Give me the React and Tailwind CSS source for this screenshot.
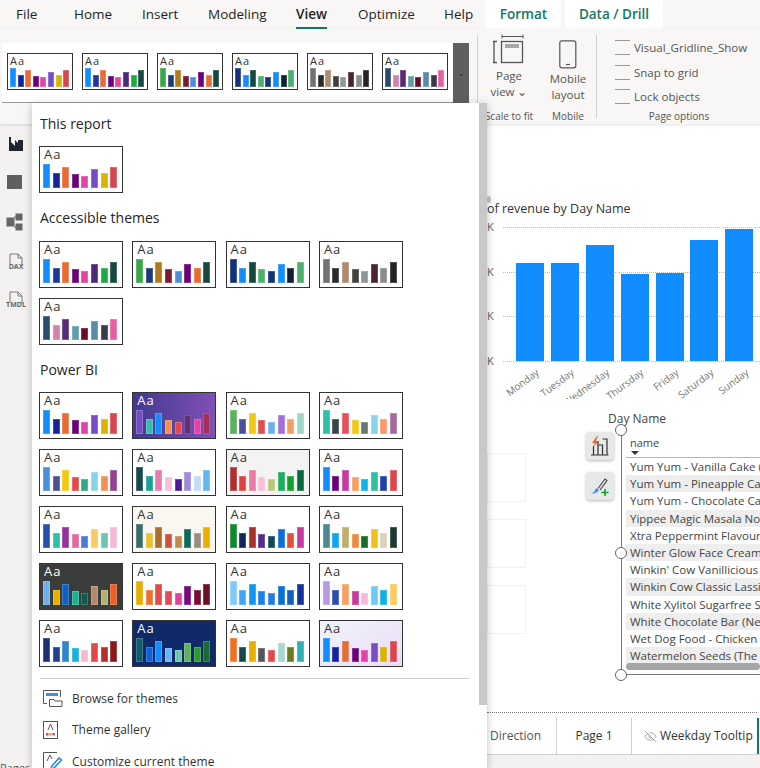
import { EyeOff } from 'lucide-react'

const HEIGHTS = [24, 15, 21, 14, 12, 19, 15, 21]
const SMALL_HEIGHTS = [19, 12, 17, 11, 10, 15, 12, 17]

const DEFAULT = ['#118DFF', '#12239E', '#E66C37', '#6B007B', '#E044A7', '#744EC2', '#D9B300', '#D64550']

const ACCESSIBLE = [
  ['#118DFF', '#1F3899', '#E66C37', '#6B007B', '#E044A7', '#4B2A7B', '#1AAB40', '#15493F'],
  ['#3AA845', '#1F3A7A', '#B37A1B', '#7A1A2E', '#4A90D9', '#6B007B', '#E66C37', '#15493F'],
  ['#12327A', '#118DFF', '#15493F', '#4CAF6E', '#12327A', '#118DFF', '#10202F', '#4CAF6E'],
  ['#6F7373', '#2B2B2B', '#AD8A70', '#404040', '#8F9699', '#4A2430', '#8C8C8C', '#252423'],
  ['#2B4A6F', '#D77FAE', '#5A2A7A', '#5F9EAF', '#6B0A2A', '#5B8BA8', '#3A3A4A', '#E85FA0'],
]

const POWER_BI = [
  { colors: DEFAULT },
  { colors: ['#744EC2', '#3FB8AF', '#118DFF', '#F2914F', '#E04A4A', '#5F2E7E', '#E044A7', '#A62E50'], bg: 'bg-gradient-to-r from-[#41398f] to-[#7f50b8]', light: true },
  { colors: ['#5BB25E', '#4A4E9C', '#F2C811', '#E04E4E', '#69B1EF', '#A66FD8', '#F2A05F', '#A0D8C8'] },
  { colors: ['#2DBFA8', '#374649', '#E8505B', '#F2C811', '#6E7373', '#8AD4EB', '#FE9666', '#A66999'] },
  { colors: ['#4A90D9', '#4A5090', '#F2C811', '#E04A4A', '#2FA884', '#8AD4EB', '#F2914F', '#96408F'] },
  { colors: ['#15494F', '#1AA198', '#E87CAC', '#F7BFD8', '#4A1A9A', '#A08BDB', '#BDDDFA', '#64B5F6'] },
  { colors: ['#B03030', '#E03F3F', '#E87C9E', '#F7BFD8', '#B8C878', '#1FAB60', '#13A02A', '#0B6A3F'], bg: 'bg-[#f3f3f3]' },
  { colors: ['#118DFF', '#6B007B', '#C83A9E', '#F89E5F', '#0FB5E8', '#2DBFA8', '#1E3FAE', '#DF4848'] },
  { colors: ['#2A4DB0', '#2DBFA8', '#96309F', '#E26AA0', '#4A7AD8', '#F9CB60', '#6FC4AC', '#F4B9D9'] },
  { colors: ['#3A6A6A', '#E8C030', '#A8702A', '#D0503A', '#C08A50', '#0F6A5A', '#9A8A80', '#E8AF00'], bg: 'bg-[#faf7f0]' },
  { colors: ['#0D8A2A', '#12255F', '#A8322A', '#5A2A8A', '#0F4A55', '#0B6FD8', '#E0503A', '#C83A9E'] },
  { colors: ['#4A8A90', '#0FA5F5', '#C0B070', '#F08A40', '#1A6A2A', '#F0C020', '#DAD2B8', '#1A3A30'] },
  { colors: ['#6FB0E8', '#E8AF00', '#1060C0', '#20B090', '#0F5A50', '#B08A6A', '#B0B070', '#E8602A'], bg: 'bg-[#3b3d3b]', light: true },
  { colors: ['#E8AF00', '#EE7030', '#E24A4A', '#E24A5A', '#E044A0', '#7A0A7A', '#7A0A30', '#6B0F25'] },
  { colors: ['#7DCBFA', '#3FA5F5', '#1098F0', '#1E80EA', '#1E7CE8', '#0B6FD8', '#0F60C0', '#13329A'] },
  { colors: ['#B59BE8', '#2A4DB0', '#F7A060', '#C83A9E', '#F4B9E0', '#6FC8F5', '#10B0E0', '#F9CB60'] },
  { colors: ['#22306F', '#1F3F90', '#2F86D0', '#1AB0E0', '#F4B9D0', '#E04A4A', '#B03030', '#8A1A1A'] },
  { colors: ['#135A6A', '#1060D8', '#118DFF', '#64B5F6', '#6FC4AC', '#5BB25E', '#2A9A3A', '#1A6A30'], bg: 'bg-[#10296b]', light: true },
  { colors: ['#F07020', '#15494F', '#E8AF00', '#555555', '#E04A4A', '#A8D8D0', '#6A7A20', '#30B0B0'] },
  { colors: DEFAULT, bg: 'bg-gradient-to-br from-[#eef4fc] to-[#ecdcf4]' },
]

const TABS = [
  { label: 'File', w: 'w-[58px]' },
  { label: 'Home', w: 'w-[68px]' },
  { label: 'Insert', w: 'w-[66px]' },
  { label: 'Modeling', w: 'w-[88px]' },
  { label: 'View', w: 'w-[62px]', active: true },
  { label: 'Optimize', w: 'w-[86px]' },
  { label: 'Help', w: 'w-[43px]' },
]

const DAYS = [
  { name: 'Monday', h: 98 },
  { name: 'Tuesday', h: 98 },
  { name: 'Wednesday', h: 116 },
  { name: 'Thursday', h: 87 },
  { name: 'Friday', h: 88 },
  { name: 'Saturday', h: 121 },
  { name: 'Sunday', h: 132 },
]

const ROWS = [
  'Yum Yum - Vanilla Cake (Monginis)',
  'Yum Yum - Pineapple Cake (Monginis)',
  'Yum Yum - Chocolate Cake (Monginis)',
  'Yippee Magic Masala Noodles',
  'Xtra Peppermint Flavour - Chewing Gum',
  'Winter Glow Face Cream (Garnier)',
  "Winkin' Cow Vanillicious Thick Shake",
  'Winkin Cow Classic Lassi (Bottle)',
  'White Xylitol Sugarfree Spearmint',
  'White Chocolate Bar (Nestle Milkybar)',
  'Wet Dog Food - Chicken & Rice',
  'Watermelon Seeds (The Nibble)',
]

function ThemeTile({ colors, bg = 'bg-white', light = false, small = false }) {
  const heights = small ? SMALL_HEIGHTS : HEIGHTS
  return (
    <div className={`flex flex-col justify-between overflow-hidden border border-[#333] ${bg} ${small ? 'w-[66px] h-[37px] pl-[2px] pb-[2px]' : 'w-[84px] h-[47px] pl-[3px] pb-[4px]'}`}>
      <span className={`block tracking-[1px] ${light ? 'text-white' : 'text-[#333]'} ${small ? 'text-[11px] leading-[13px]' : 'text-[13px] leading-[15px] pl-[1px]'}`}>Aa</span>
      <div className={`flex items-end ${small ? 'gap-[1.6px]' : 'gap-[2.6px]'}`}>
        {colors.map((color, i) => (
          <div
            key={i}
            className={`border border-white/20 ${small ? 'w-[6px]' : 'w-[7px]'}`}
            style={{ backgroundColor: color, height: heights[i] }}
          />
        ))}
      </div>
    </div>
  )
}

function SectionTitle({ children, className = '' }) {
  return <h3 className={`pl-[1px] text-[14px] leading-[20px] font-medium text-[#252423] ${className}`}>{children}</h3>
}

function PageViewIcon() {
  return (
    <svg width="32" height="32" viewBox="0 0 32 32" fill="none" stroke="#555" strokeWidth="1">
      <path d="M9 2.5H30M9 0.5V4.5M30 0.5V4.5" />
      <path d="M1 7.5V28.5M-1 7.5H4M-1 28.5H4" strokeWidth="1.3" />
      <rect x="8.5" y="7.5" width="21" height="21" strokeWidth="1.3" />
      <rect x="12" y="10" width="14" height="4" fill="#a6a6a6" stroke="none" />
    </svg>
  )
}

function MobileIcon() {
  return (
    <svg width="18" height="29" viewBox="0 0 18 29" fill="none" stroke="#555" strokeWidth="1.2">
      <rect x="0.8" y="0.8" width="16" height="27" rx="2" />
      <path d="M7 24.5H11" />
    </svg>
  )
}

function ReportIcon() {
  return (
    <svg width="14" height="14" viewBox="0 0 14 14" fill="#1f2430">
      <path d="M0 0H2V5L6 9V3L9 6V3H14V14H0Z" />
    </svg>
  )
}

function ModelIcon() {
  return (
    <svg width="18" height="18" viewBox="0 0 18 18" fill="#666" stroke="#666" strokeWidth="1">
      <rect x="10" y="1" width="6" height="6" />
      <rect x="10" y="11" width="6" height="6" />
      <rect x="1" y="5" width="7" height="8" />
      <path d="M8 4H10M8 14H10" fill="none" />
    </svg>
  )
}

function FileLabelIcon({ label }) {
  return (
    <div className="relative w-[24px] h-[20px]">
      <svg width="24" height="20" viewBox="0 0 24 20" fill="none" stroke="#777" strokeWidth="1">
        <path d="M6 12V2H14L18 6V14" />
        <path d="M14 2V6H18" />
      </svg>
      <span className="absolute left-0 right-0 top-[10px] text-center text-[7px] leading-[9px] font-bold text-[#666]">{label}</span>
    </div>
  )
}

function BrowseIcon() {
  return (
    <svg width="20" height="18" viewBox="0 0 20 18" fill="none" stroke="#555" strokeWidth="1">
      <path d="M4 13.5H0.5V0.5H17.5V7" />
      <rect x="3" y="3" width="12" height="3" fill="#3b8fe0" stroke="none" />
      <path d="M6.5 16.5V9.5H11L12 11H19V16.5Z" fill="white" />
    </svg>
  )
}

function GalleryIcon() {
  return (
    <svg width="15" height="18" viewBox="0 0 15 18" fill="none" stroke="#555" strokeWidth="1">
      <rect x="0.5" y="0.5" width="14" height="17" />
      <path d="M5 9L7.5 3L10 9" />
      <rect x="3" y="12" width="2.5" height="2.5" fill="#e04a4a" stroke="none" />
      <rect x="6.2" y="12" width="2.5" height="2.5" fill="#e8af00" stroke="none" />
      <rect x="9.4" y="12" width="2.5" height="2.5" fill="#e044a7" stroke="none" />
    </svg>
  )
}

function CustomizeIcon() {
  return (
    <svg width="20" height="20" viewBox="0 0 20 20" fill="none" stroke="#555" strokeWidth="1">
      <path d="M14 0.5H0.5V17.5H6" />
      <path d="M4 9L7 3L9 7" />
      <path d="M7 19L9 14L16 6L18.5 8L11 16Z" stroke="#2f86d0" strokeWidth="1.6" />
    </svg>
  )
}

function BuildIcon() {
  return (
    <svg width="20" height="20" viewBox="0 0 20 20" fill="none">
      <path d="M7 0L2 7H5L3 11L9 5H6L8 0Z" fill="#e66c37" />
      <path d="M3.5 19V10M8 19V5.5M8 9H12.5V19M12.5 3H17V19M1 19H18.5" stroke="#333" strokeWidth="1.2" />
    </svg>
  )
}

function FormatIcon() {
  return (
    <svg width="20" height="20" viewBox="0 0 20 20" fill="none">
      <path d="M1 17C4 17 5 15 6 12L9 14C7 17 4 18 1 17Z" fill="#3b8fe0" />
      <path d="M8 12.5L15 3L17 4.5L10 14" stroke="#444" strokeWidth="1.1" />
      <path d="M15 13V20M11.5 16.5H18.5" stroke="#13a02a" strokeWidth="1.6" />
    </svg>
  )
}

function Handle({ className }) {
  return <span className={`absolute w-[12px] h-[12px] rounded-full bg-white border border-[#666] ${className}`} />
}

function ThemesMenu() {
  return (
    <div className="absolute left-[32px] top-[103px] bottom-0 w-[455px] z-20 bg-white pl-[7px] pt-[11px] shadow-[0_2px_8px_rgba(0,0,0,0.25)]">
      <SectionTitle className="mb-[12px]">This report</SectionTitle>
      <ThemeTile colors={DEFAULT} />

      <SectionTitle className="mt-[15px] mb-[13px]">Accessible themes</SectionTitle>
      <div className="grid grid-cols-[repeat(4,84px)] gap-x-[9.3px] gap-y-[10px]">
        {ACCESSIBLE.map((colors, i) => <ThemeTile key={i} colors={colors} />)}
      </div>

      <SectionTitle className="mt-[15px] mb-[12px]">Power BI</SectionTitle>
      <div className="grid grid-cols-[repeat(4,84px)] gap-x-[9.3px] gap-y-[10px]">
        {POWER_BI.map((theme, i) => <ThemeTile key={i} {...theme} />)}
      </div>

      <div className="mt-[11px] mb-[4px] mr-[17px] ml-[1px] border-t border-[#d2d0ce]" />
      {[
        { label: 'Browse for themes', icon: <BrowseIcon /> },
        { label: 'Theme gallery', icon: <GalleryIcon /> },
        { label: 'Customize current theme', icon: <CustomizeIcon /> },
      ].map(item => (
        <div key={item.label} className="flex items-center h-[31.5px] text-[12px] text-[#333]">
          <span className="w-[33px] pl-[4px] flex items-center">{item.icon}</span>
          {item.label}
        </div>
      ))}

      {/* scrollbar */}
      <div className="absolute right-0 top-0 w-[8px] h-[602px] bg-[#c8c8c8]" />
    </div>
  )
}

function Chart() {
  return (
    <div className="absolute left-0 top-[65px] w-[273px] h-[210px] overflow-hidden">
      <span className="absolute left-0 top-[7px] w-[4px] h-[7px] rounded-full bg-[#c8c8c8]" />
      <h4 className="pt-[12px] text-[12.5px] leading-[16px] font-medium text-[#333] whitespace-nowrap">of revenue by Day Name</h4>
      {[38, 83, 127, 172].map(top => (
        <div key={top} className="absolute left-0 right-0" style={{ top }}>
          <span className="absolute left-0 -top-[7px] text-[11px] leading-[13px] text-[#666]">K</span>
          <div className="ml-[16px] border-t border-dotted border-[#bbb]" />
        </div>
      ))}
      <div className="absolute left-[29px] top-[40px] h-[132px] flex items-end gap-[6.9px]">
        {DAYS.map(day => (
          <div key={day.name} className="relative w-[28px] bg-[#118dff]" style={{ height: day.h }}>
            <span className="absolute right-[10px] top-full mt-[5px] origin-top-right -rotate-[37deg] text-[10px] leading-[12px] text-[#777] whitespace-nowrap">{day.name}</span>
          </div>
        ))}
      </div>
    </div>
  )
}

function TableVisual() {
  return (
    <div className="absolute left-[99px] top-[282px] w-[174px]">
      <p className="pl-[22px] h-[26px] text-[12px] leading-[26px] text-[#444]">Day Name</p>
      <div className="relative flex h-[243px]">
        {/* visual headers */}
        <div className="w-[35px] pt-0 flex flex-col gap-[12px]">
          <span className="w-[28px] h-[28px] flex items-center justify-center rounded-sm bg-[#e8e8e8] shadow-[0_1px_3px_rgba(0,0,0,0.3)]"><BuildIcon /></span>
          <span className="w-[28px] h-[28px] flex items-center justify-center rounded-sm bg-[#e8e8e8] shadow-[0_1px_3px_rgba(0,0,0,0.3)]"><FormatIcon /></span>
        </div>
        <div className="flex-1 min-w-0 border-l border-b border-[#777] pl-[4px] overflow-hidden">
          <div className="h-[26px] pl-[4px] border-b border-[#90c0e8] relative text-[11px] leading-[22px] text-[#444]">
            name
            <span className="absolute left-[5px] top-[19px] w-0 h-0 border-x-[4px] border-x-transparent border-t-[4px] border-t-[#333]" />
          </div>
          {ROWS.map((row, i) => (
            <div key={row} className={`h-[17.2px] pl-[4px] text-[11.5px] leading-[17px] text-[#444] whitespace-nowrap ${i % 2 ? 'bg-[#eeeeee]' : ''}`}>{row}</div>
          ))}
          <div className="mt-[-1px] h-[7px] rounded-full bg-[#a6a6a6]" />
        </div>
        <Handle className="left-[29px] -top-[8px]" />
        <Handle className="left-[29px] top-[115px]" />
        <Handle className="left-[29px] bottom-[-6px]" />
      </div>
    </div>
  )
}

export default function App() {
  return (
    <div className="relative w-[760px] h-[768px] overflow-hidden flex flex-col bg-[#f3f2f1] font-['Open_Sans','Noto_Sans',sans-serif]">
      {/* menu tabs */}
      <div className="h-[29px] flex pl-[16px] bg-[#f8f7f6] text-[13.5px] leading-[29px] text-[#252423]">
        {TABS.map(tab => (
          <div key={tab.label} className={`${tab.w} shrink-0`}>
            <span className={`inline-block whitespace-nowrap ${tab.active ? 'h-[29px] border-b-2 border-[#117865] font-semibold' : ''}`}>{tab.label}</span>
          </div>
        ))}
        <div className="ml-[-1px] w-[75px] bg-white text-center font-semibold text-[#117865]">Format</div>
        <div className="ml-[4px] w-[98px] bg-white text-center font-semibold text-[#117865]">Data / Drill</div>
      </div>

      {/* ribbon */}
      <div className="relative z-10 h-[95px] flex bg-[#f8f7f6] shadow-[0_1px_3px_rgba(0,0,0,0.12)] text-[#555]">
        <div className="ml-[2px] mt-[14px] h-[60px] w-[451px] flex items-center gap-[9px] pl-[5px] pb-[2px] bg-white border-b border-[#999]">
          {ACCESSIBLE.slice(0, 0)}
          <ThemeTile colors={DEFAULT} small />
          {ACCESSIBLE.map((colors, i) => <ThemeTile key={i} colors={colors} small />)}
        </div>
        <div className="mt-[14px] h-[60px] w-[16px] flex items-center justify-center bg-[#5f5f5f] text-[#222] text-[8px]">⌄</div>

        <div className="ml-[8px] my-[6px] border-l border-[#d2d0ce]" />
        <div className="w-[62px] flex flex-col items-center pt-[5px]">
          <PageViewIcon />
          <p className="mt-[2px] text-center text-[11.5px] leading-[16px]">Page<br />view ⌄</p>
          <p className="mt-auto mb-[1px] text-[10px] leading-[14px] whitespace-nowrap">Scale to fit</p>
        </div>
        <div className="w-[56px] flex flex-col items-center pt-[11px]">
          <MobileIcon />
          <p className="mt-[2px] text-center text-[11.5px] leading-[16px]">Mobile<br />layout</p>
          <p className="mt-auto mb-[1px] text-[10px] leading-[14px]">Mobile</p>
        </div>
        <div className="my-[6px] border-l border-[#d2d0ce]" />
        <div className="w-[163px] flex flex-col pt-[11px]">
          <div className="pl-[18px] flex flex-col gap-[9.5px] text-[11.5px] leading-[15px] whitespace-nowrap">
            {['Visual_Gridline_Show', 'Snap to grid', 'Lock objects'].map(label => (
              <div key={label} className="flex items-center gap-[4px]">
                <span className="w-[15px] h-[15px] border-y border-[#999]" />
                {label}
              </div>
            ))}
          </div>
          <p className="mt-auto mb-[1px] text-center text-[10px] leading-[14px] pl-[1px]">Page options</p>
        </div>
      </div>

      {/* body */}
      <div className="flex-1 min-h-0 flex">
        <div className="relative w-[32px] shrink-0 flex flex-col items-center pt-[13px]">
          <div className="h-[38px]"><ReportIcon /></div>
          <div className="w-[15px] h-[14px] bg-[#5f5f5f] mb-[24px] mr-[3px]" />
          <div className="h-[39px] mr-[2px]"><ModelIcon /></div>
          <div className="h-[38px]"><FileLabelIcon label="DAX" /></div>
          <FileLabelIcon label="TMDL" />
          <span className="absolute left-0 bottom-[-7px] text-[11px] leading-[14px] text-[#555] whitespace-nowrap">Pages 3</span>
        </div>

        <div className="flex-1 min-w-0 flex flex-col">
          <div className="relative flex-1 min-h-0 bg-white overflow-hidden pl-[455px]">
            <div className="absolute left-[455px] right-0 top-0 bottom-0 overflow-hidden">
              <Chart />
              {[329, 395, 461].map(top => (
                <div key={top} className="absolute left-0 w-[39px] h-[49px] border border-[#f3f2f1]" style={{ top }} />
              ))}
              <TableVisual />
              <div className="absolute left-0 right-[3px] bottom-[5px] border-t border-dotted border-[#777]" />
            </div>
          </div>
          {/* page tabs */}
          <div className="h-[37px] flex pl-[455px] bg-white border-b border-[#d2d0ce] text-[12px] text-[#333]">
            <div className="w-[70px] shrink-0 pl-[3px] flex items-center border-r border-[#d2d0ce] text-[#555]">Direction</div>
            <div className="w-[75px] shrink-0 flex items-center justify-center border-r border-[#d2d0ce]">Page 1</div>
            <div className="w-[127px] shrink-0 pl-[12px] flex items-center gap-[3px] border-r-2 border-[#117865] whitespace-nowrap">
              <EyeOff size={13} strokeWidth={1} className="text-[#666]" />
              Weekday Tooltip
            </div>
          </div>
          <div className="h-[13px]" />
        </div>
      </div>

      <ThemesMenu />
    </div>
  )
}
